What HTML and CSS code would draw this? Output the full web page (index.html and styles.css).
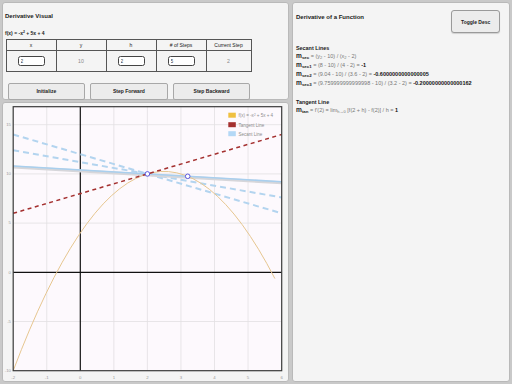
FILE: index.html
```html
<!DOCTYPE html>
<html lang="en">
<head>
    <meta charset="UTF-8">
    <title>Derivative Visual</title>
    <link rel="stylesheet" href="styles.css">
</head>
<body>
    <div class="app">
        <div class="left-col">
            <section class="panel controls">
                <h1 class="panel-title">Derivative Visual</h1>
                <p class="func">f(x) = -x<sup>2</sup> + 5x + 4</p>
                <table class="step-table">
                    <tr><th>x</th><th>y</th><th>h</th><th># of Steps</th><th>Current Step</th></tr>
                    <tr>
                        <td><input type="text" value="2"></td>
                        <td class="muted">10</td>
                        <td><input type="text" value="2"></td>
                        <td><input type="text" value="5"></td>
                        <td class="muted">2</td>
                    </tr>
                </table>
                <div class="actions">
                    <button class="btn">Initialize</button>
                    <button class="btn">Step Forward</button>
                    <button class="btn">Step Backward</button>
                </div>
            </section>

            <section class="panel chart">
                <!-- viewBox uses page coordinates so the plot maps straight onto the screenshot -->
                <svg class="plot" width="283" height="278" viewBox="3 103 283 278">
                    <rect x="13.2" y="106.7" width="268.5" height="264" fill="#fdf9fd"/>
                    <g stroke="#e2dfe2" stroke-width="0.8">
                        <line x1="46.75" y1="106.7" x2="46.75" y2="370.7"/>
                        <line x1="113.85" y1="106.7" x2="113.85" y2="370.7"/>
                        <line x1="147.4" y1="106.7" x2="147.4" y2="370.7"/>
                        <line x1="180.95" y1="106.7" x2="180.95" y2="370.7"/>
                        <line x1="214.5" y1="106.7" x2="214.5" y2="370.7"/>
                        <line x1="248.05" y1="106.7" x2="248.05" y2="370.7"/>
                        <line x1="13.2" y1="124.7" x2="281.7" y2="124.7"/>
                        <line x1="13.2" y1="173.9" x2="281.7" y2="173.9"/>
                        <line x1="13.2" y1="223.1" x2="281.7" y2="223.1"/>
                        <line x1="13.2" y1="321.5" x2="281.7" y2="321.5"/>
                    </g>
                    <g stroke="#111" stroke-width="1.2">
                        <line x1="80.3" y1="106.7" x2="80.3" y2="370.7"/>
                        <line x1="13.2" y1="272.3" x2="281.7" y2="272.3"/>
                    </g>

                    <!-- secant lines -->
                    <line x1="13.2" y1="134.5" x2="281.7" y2="213.3" stroke="#b3d4ef" stroke-width="2" stroke-dasharray="6 4"/>
                    <line x1="13.2" y1="150.3" x2="281.7" y2="197.5" stroke="#b3d4ef" stroke-width="2" stroke-dasharray="6 4"/>
                    <line x1="13.2" y1="167.1" x2="281.7" y2="182.8" stroke="#d6d6da" stroke-width="3"/>
                    <line x1="13.2" y1="166.0" x2="281.7" y2="181.8" stroke="#a9cfee" stroke-width="1.6"/>

                    <!-- f(x) = -x^2 + 5x + 4, as an exact quadratic bezier -->
                    <path d="M13.2 370.7 Q144 25.3 274.9 278.6" fill="none" stroke="#e6c690" stroke-width="1"/>

                    <!-- tangent line -->
                    <line x1="13.2" y1="213.3" x2="281.7" y2="134.5" stroke="#a4302f" stroke-width="1.5" stroke-dasharray="4 3.5"/>

                    <circle cx="147.4" cy="173.9" r="2.3" fill="#fff" stroke="#4d49dc" stroke-width="0.9"/>
                    <circle cx="187.7" cy="176.3" r="2.3" fill="#fff" stroke="#4d49dc" stroke-width="0.9"/>

                    <rect x="13.2" y="106.7" width="268.5" height="264" fill="none" stroke="#3a3a3a" stroke-width="1.2"/>

                    <g class="legend">
                        <rect x="228.3" y="112.7" width="7.5" height="5" fill="#efc040"/>
                        <rect x="228.3" y="122.2" width="7.5" height="5" fill="#a4302f"/>
                        <rect x="228.3" y="131.2" width="7.5" height="5" fill="#b3d8f6"/>
                        <text x="238.5" y="117.3">f(x) = -x<tspan dy="-1.5" font-size="3">2</tspan><tspan dy="1.5"> + 5x + 4</tspan></text>
                        <text x="238.5" y="126.8">Tangent Line</text>
                        <text x="238.5" y="135.8">Secant Line</text>
                    </g>

                    <g class="axis-y">
                        <text x="11" y="126">15</text>
                        <text x="11" y="175.2">10</text>
                        <text x="11" y="224.4">5</text>
                        <text x="11" y="273.6">0</text>
                        <text x="11" y="322.8">-5</text>
                        <text x="11" y="372">-10</text>
                    </g>
                    <g class="axis-x">
                        <text x="13.2" y="378.6">-2</text>
                        <text x="46.75" y="378.6">-1</text>
                        <text x="80.3" y="378.6">0</text>
                        <text x="113.85" y="378.6">1</text>
                        <text x="147.4" y="378.6">2</text>
                        <text x="180.95" y="378.6">3</text>
                        <text x="214.5" y="378.6">4</text>
                        <text x="248.05" y="378.6">5</text>
                        <text x="281.7" y="378.6">6</text>
                    </g>
                </svg>
            </section>
        </div>

        <section class="panel info">
            <div class="info-head">
                <h1 class="panel-title">Derivative of a Function</h1>
                <button class="btn toggle">Toggle Desc</button>
            </div>

            <h2 class="sub-title">Secant Lines</h2>
            <p class="eq"><b class="m">m<sub>sec</sub></b> = (y<sub>2</sub> - 10) / (x<sub>2</sub> - 2)</p>
            <p class="eq"><b class="m">m<sub>sec1</sub></b> = (8 - 10) / (4 - 2) = <b>-1</b></p>
            <p class="eq"><b class="m">m<sub>sec2</sub></b> = (9.04 - 10) / (3.6 - 2) = <b>-0.6000000000000005</b></p>
            <p class="eq"><b class="m">m<sub>sec3</sub></b> = (9.759999999999998 - 10) / (3.2 - 2) = <b>-0.20000000000000162</b></p>

            <h2 class="sub-title tangent">Tangent Line</h2>
            <p class="eq"><b class="m">m<sub>tan</sub></b> = f'(2) = lim<sub>h&rarr;0</sub> [f(2 + h) - f(2)] / h = <b>1</b></p>
        </section>
    </div>
</body>
</html>
```

FILE: styles.css
```css
* { margin: 0; padding: 0; box-sizing: border-box; }
body { font-family: 'Liberation Sans', Arial, sans-serif; background: #c9c9c9; color: #222; width: 512px; height: 384px; overflow: hidden; padding: 2px; }

.app { display: grid; grid-template-columns: 287px 218px; gap: 3px; height: 380px; }
.left-col { display: flex; flex-direction: column; gap: 2px; }

.panel { background: #f4f4f4; border: 1px solid #b9b9b9; border-radius: 3px; }
.panel-title { font-size: 6px; font-weight: 700; line-height: 8px; color: #1a1a1a; }

/* --- Controls --- */
.controls { height: 98px; padding: 0 2px; }
.controls .panel-title { margin-top: 9px; }
.func { font-size: 5px; font-weight: 700; line-height: 7px; margin-top: 10px; }
.func sup { font-size: 3.5px; vertical-align: 2px; line-height: 0; }

.step-table { border-collapse: collapse; margin: 2px 0 0 0.5px; font-size: 5px; table-layout: fixed; }
.step-table th, .step-table td { border: 1px solid #555; text-align: center; width: 50px; }
.step-table th:last-child, .step-table td:last-child { width: 45px; }
.step-table th { height: 11px; font-weight: 400; color: #222; }
.step-table td { height: 21px; }
.step-table .muted { color: #8a8a8a; font-size: 5.2px; }
.step-table input { width: 27px; height: 10px; border: 1px solid #444; border-radius: 2.5px; background: #fff; font-family: inherit; font-size: 4.8px; padding: 0 2px; color: #333; outline: none; display: block; margin: 0 auto; }

.actions { display: flex; gap: 5.3px; margin: 10.6px 0 0 2.7px; }
.btn { font-family: inherit; font-weight: 700; font-size: 5px; color: #222; background: #ececec; border: 1px solid #a8a8a8; border-radius: 2px; cursor: pointer; }
.actions .btn { width: 77.3px; height: 17.6px; }

/* --- Chart --- */
.chart { flex: 1; overflow: hidden; }
.plot { display: block; }
.legend text { font-size: 4.5px; fill: #8c8c8c; font-family: 'Liberation Sans', Arial, sans-serif; }
.axis-y text { font-size: 4.3px; fill: #9a9a9a; text-anchor: end; font-family: 'Liberation Sans', Arial, sans-serif; }
.axis-x text { font-size: 4.3px; fill: #9a9a9a; text-anchor: middle; font-family: 'Liberation Sans', Arial, sans-serif; }

/* --- Info --- */
.info { padding: 0 3px; }
.info-head { display: flex; justify-content: space-between; align-items: flex-start; padding-top: 6px; height: 30px; }
.info-head .panel-title { margin-top: 4px; }
.toggle { width: 48.7px; height: 23px; margin-top: 1px; margin-right: 6px; border-radius: 3px; border-color: #9a9a9a; box-shadow: 0 1px 1px rgba(0,0,0,0.15); font-size: 5px; }

.sub-title { font-size: 5.4px; font-weight: 700; line-height: 8px; height: 8px; margin-top: 11px; color: #1a1a1a; }
.sub-title.tangent { margin-top: 9.7px; }
.eq { font-size: 5.5px; line-height: 9px; height: 9px; color: #777; white-space: nowrap; }
.eq b { color: #111; }
.eq .m { font-size: 6.6px; color: #222; line-height: 1; }
.eq sub { font-size: 4px; vertical-align: -1px; line-height: 0; }
.eq .m sub { font-size: 4.4px; }
```
